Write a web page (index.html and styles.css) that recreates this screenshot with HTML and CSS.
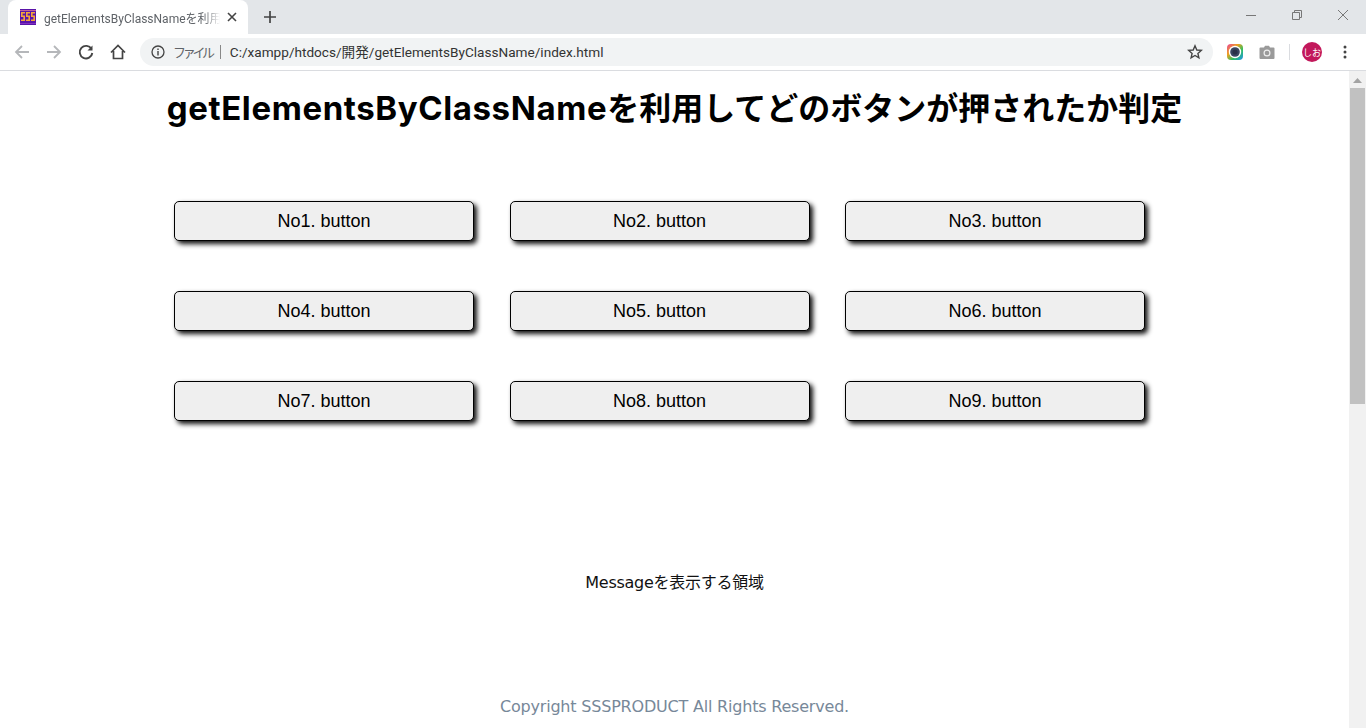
FILE: index.html
```html
<!DOCTYPE html>
<html lang="ja">
<head>
<meta charset="utf-8">
<title>getElementsByClassNameを利用してどのボタンが押されたか判定</title>
<link rel="stylesheet" href="styles.css">
</head>
<body>
<header class="chrome">
  <div class="tabstrip">
    <div class="tab">
      <svg class="favicon" width="16" height="16" viewBox="0 0 16 16"><rect width="16" height="16" fill="#5a14a8"/><rect y="1" width="16" height="1" fill="#c060a0"/><rect y="14" width="16" height="1" fill="#8030c0"/><path d="M1 3h4v1.600H2.600v1.800H5V12H1v-1.600h2.400V8H1zM6 3h4v1.600H7.600v1.800H10V12H6v-1.600h2.400V8H6zM11 3h4v1.600h-2.400v1.800H15V12h-4v-1.600h2.400V8H11z" fill="#f5a53a"/></svg>
      <span class="tab-title">getElementsByClassNameを利用してどの</span>
      <svg class="tab-close" width="10" height="10" viewBox="0 0 10 10"><path d="M1 1l8 8M9 1l-8 8" stroke="#444" stroke-width="1.600" fill="none"/></svg>
    </div>
    <svg class="newtab" width="14" height="14" viewBox="0 0 14 14"><path d="M7 1v12M1 7h12" stroke="#444" stroke-width="1.700" fill="none"/></svg>
    <div class="winctl">
      <svg width="12" height="12" viewBox="0 0 12 12"><path d="M1 6.500h10" stroke="#777" fill="none"/></svg>
      <svg width="12" height="12" viewBox="0 0 12 12"><path d="M1.500 3.500h7v7h-7zM3.500 3.500v-2h7v7h-2" stroke="#777" fill="none"/></svg>
      <svg width="12" height="12" viewBox="0 0 12 12"><path d="M1 1l10 10M11 1L1 11" stroke="#777" fill="none"/></svg>
    </div>
  </div>
  <div class="toolbar">
    <div class="navs">
      <svg width="18" height="18" viewBox="0 0 18 18"><path d="M16 9H3M9 3L3 9l6 6" stroke="#b5b7ba" stroke-width="1.800" fill="none"/></svg>
      <svg width="18" height="18" viewBox="0 0 18 18"><path d="M2 9h13M9 3l6 6-6 6" stroke="#b5b7ba" stroke-width="1.800" fill="none"/></svg>
      <svg width="18" height="18" viewBox="0 0 18 18"><path d="M14.500 6A6.300 6.300 0 1 0 15.300 10" stroke="#444" stroke-width="1.900" fill="none"/><path d="M15.500 2.500V7.500H10.500z" fill="#444"/></svg>
      <svg width="18" height="18" viewBox="0 0 18 18"><path d="M2 9.500L9 2.500l7 7M4.500 8v7.500h9V8" stroke="#444" stroke-width="1.700" fill="none"/></svg>
    </div>
    <div class="omnibox">
      <svg class="info" width="14" height="14" viewBox="0 0 14 14"><circle cx="7" cy="7" r="6" stroke="#444" stroke-width="1.300" fill="none"/><path d="M7 6v4.500M7 3.500v1.400" stroke="#444" stroke-width="1.400" fill="none"/></svg>
      <span class="scheme">ファイル</span>
      <span class="pipe"></span>
      <span class="url">C:/xampp/htdocs/開発/getElementsByClassName/index.html</span>
      <svg class="star" width="16" height="16" viewBox="0 0 16 16"><path d="M8 1.800l1.800 4.200 4.500.4-3.400 3 1 4.400L8 11.500l-3.900 2.300 1-4.400-3.400-3 4.500-.4z" stroke="#444" stroke-width="1.400" fill="none"/></svg>
    </div>
    <div class="exts">
      <svg class="ext-color" width="16" height="16" viewBox="0 0 16 16"><defs><linearGradient id="ring" x1="0" y1="0" x2="1" y2="1"><stop offset="0" stop-color="#e8409a"/><stop offset=".35" stop-color="#f0a020"/><stop offset=".65" stop-color="#30c060"/><stop offset="1" stop-color="#2090f0"/></linearGradient></defs><rect width="16" height="16" rx="4" fill="url(#ring)"/><circle cx="8" cy="8" r="6.200" fill="#fff"/><circle cx="8" cy="8" r="4.800" fill="#3a4560"/><circle cx="8" cy="8" r="2.600" fill="#2a3048"/></svg>
      <svg class="ext-cam" width="16" height="14" viewBox="0 0 16 14"><path d="M1.500 2.500h3.500L6 .8h4l1 1.700h3.500a1 1 0 0 1 1 1V13a1 1 0 0 1-1 1h-13a1 1 0 0 1-1-1V3.500a1 1 0 0 1 1-1z" fill="#9a9a9a"/><circle cx="8" cy="8" r="3.500" fill="#eee"/><circle cx="8" cy="8" r="2.300" fill="#9a9a9a"/></svg>
      <span class="sep"></span>
      <span class="avatar">しお</span>
      <svg class="kebab" width="4" height="14" viewBox="0 0 4 14"><circle cx="2" cy="2" r="1.500" fill="#444"/><circle cx="2" cy="7" r="1.500" fill="#444"/><circle cx="2" cy="12" r="1.500" fill="#444"/></svg>
    </div>
  </div>
</header>
<div class="viewport">
  <main class="page">
    <h1 class="title"><span class="title-latin">getElementsByClassName</span>を利用してどのボタンが押されたか判定</h1>
    <div class="buttons">
      <button class="btn">No1. button</button>
      <button class="btn">No2. button</button>
      <button class="btn">No3. button</button>
      <button class="btn">No4. button</button>
      <button class="btn">No5. button</button>
      <button class="btn">No6. button</button>
      <button class="btn">No7. button</button>
      <button class="btn">No8. button</button>
      <button class="btn">No9. button</button>
    </div>
    <p class="message">Messageを表示する領域</p>
    <p class="copyright">Copyright SSSPRODUCT All Rights Reserved.</p>
  </main>
  <aside class="scrollbar">
    <svg class="arrow" width="9" height="5" viewBox="0 0 9 5"><path d="M4.500 0L9 5H0z" fill="#a3a3a3"/></svg>
    <div class="thumb"></div>
  </aside>
</div>
</body>
</html>
```
FILE: styles.css
```css
* { box-sizing: border-box; }
html, body { margin: 0; height: 100%; overflow: hidden; }
body {
  display: flex;
  flex-direction: column;
  background: #fff;
  color: #000;
  font-family: "DejaVu Sans", "Noto Sans CJK JP", sans-serif;
}
svg { display: block; flex: none; }

.chrome { flex: none; height: 71px; border-bottom: 1px solid #dadce0; font-family: "Roboto", "Noto Sans CJK JP", sans-serif; }
.tabstrip { height: 34px; background: #e3e6e9; display: flex; align-items: center; padding: 0 0 0 8px; }
.tab { width: 240px; height: 34px; background: #fff; border-radius: 8px 8px 0 0; display: flex; align-items: center; padding: 0 10px 0 12px; }
.favicon { margin-right: 8px; }
.tab-title { width: 176px; overflow: hidden; white-space: nowrap; font-size: 12px; color: #5f6368; mask-image: linear-gradient(to right, #000 160px, transparent 176px); }
.tab-close { margin-left: 7px; }
.newtab { margin-left: 15px; }
.winctl { margin-left: auto; display: flex; gap: 34px; padding-right: 17px; margin-top: -5px; }

.toolbar { height: 36px; background: #fff; display: flex; align-items: center; padding-left: 13px; }
.navs { display: flex; gap: 14px; width: 123px; }
.omnibox { width: 1073px; height: 28px; margin-left: 4px; background: #f1f3f4; border-radius: 14px; display: flex; align-items: center; padding: 0 10px 0 11px; font-size: 13px; color: #333; }
.scheme { margin-left: 8px; color: #5f6368; font-size: 13px; letter-spacing: -3.300px; margin-top: -2px; }
.pipe { width: 1px; height: 14px; background: #888; margin: 0 9px 0 8px; }
.url { flex: 1; white-space: nowrap; font-size: 13.600px; margin-top: -2px; }
.exts { display: flex; align-items: center; margin-left: 14px; }
.ext-cam { margin-left: 16px; }
.sep { width: 1px; height: 16px; background: #dadce0; margin: 0 12px 0 14px; }
.avatar { width: 20px; height: 20px; border-radius: 50%; background: #c2185b; color: #fff; font-size: 9px; display: flex; align-items: center; justify-content: center; }
.kebab { margin-left: 21px; }

.viewport { flex: 1; min-height: 0; display: flex; }
.page { flex: 1; min-width: 0; }
.title { margin: 13px 0 0; height: 48px; line-height: 48px; font-size: 32px; font-weight: 700; text-align: center; white-space: nowrap; font-family: "Inter", "Noto Sans CJK JP", sans-serif; }
.title-latin { font-size: 33px; letter-spacing: 0.600px; }
.buttons { margin: 69px 0 0 174px; display: grid; grid-template-columns: repeat(3, 300px); column-gap: 35.500px; row-gap: 50px; }
.btn { height: 40px; border: 1px solid #000; border-radius: 5px; background: #efefef; font-family: "Liberation Sans", sans-serif; font-size: 18px; color: #000; box-shadow: 3px 3px 5px #111; padding: 0; }
.message { margin: 150px 0 0; padding-top: 1px; font-size: 16px; line-height: 22px; text-align: center; letter-spacing: -0.260px; color: #111; }
.copyright { margin: 102px 0 0; font-size: 16px; line-height: 22px; text-align: center; color: #778899; letter-spacing: -0.200px; }

.scrollbar { width: 17px; flex: none; background: #f1f1f1; display: flex; flex-direction: column; align-items: center; padding-top: 7px; }
.thumb { width: 15px; height: 316px; margin-top: 5px; background: #c1c1c1; }
```
